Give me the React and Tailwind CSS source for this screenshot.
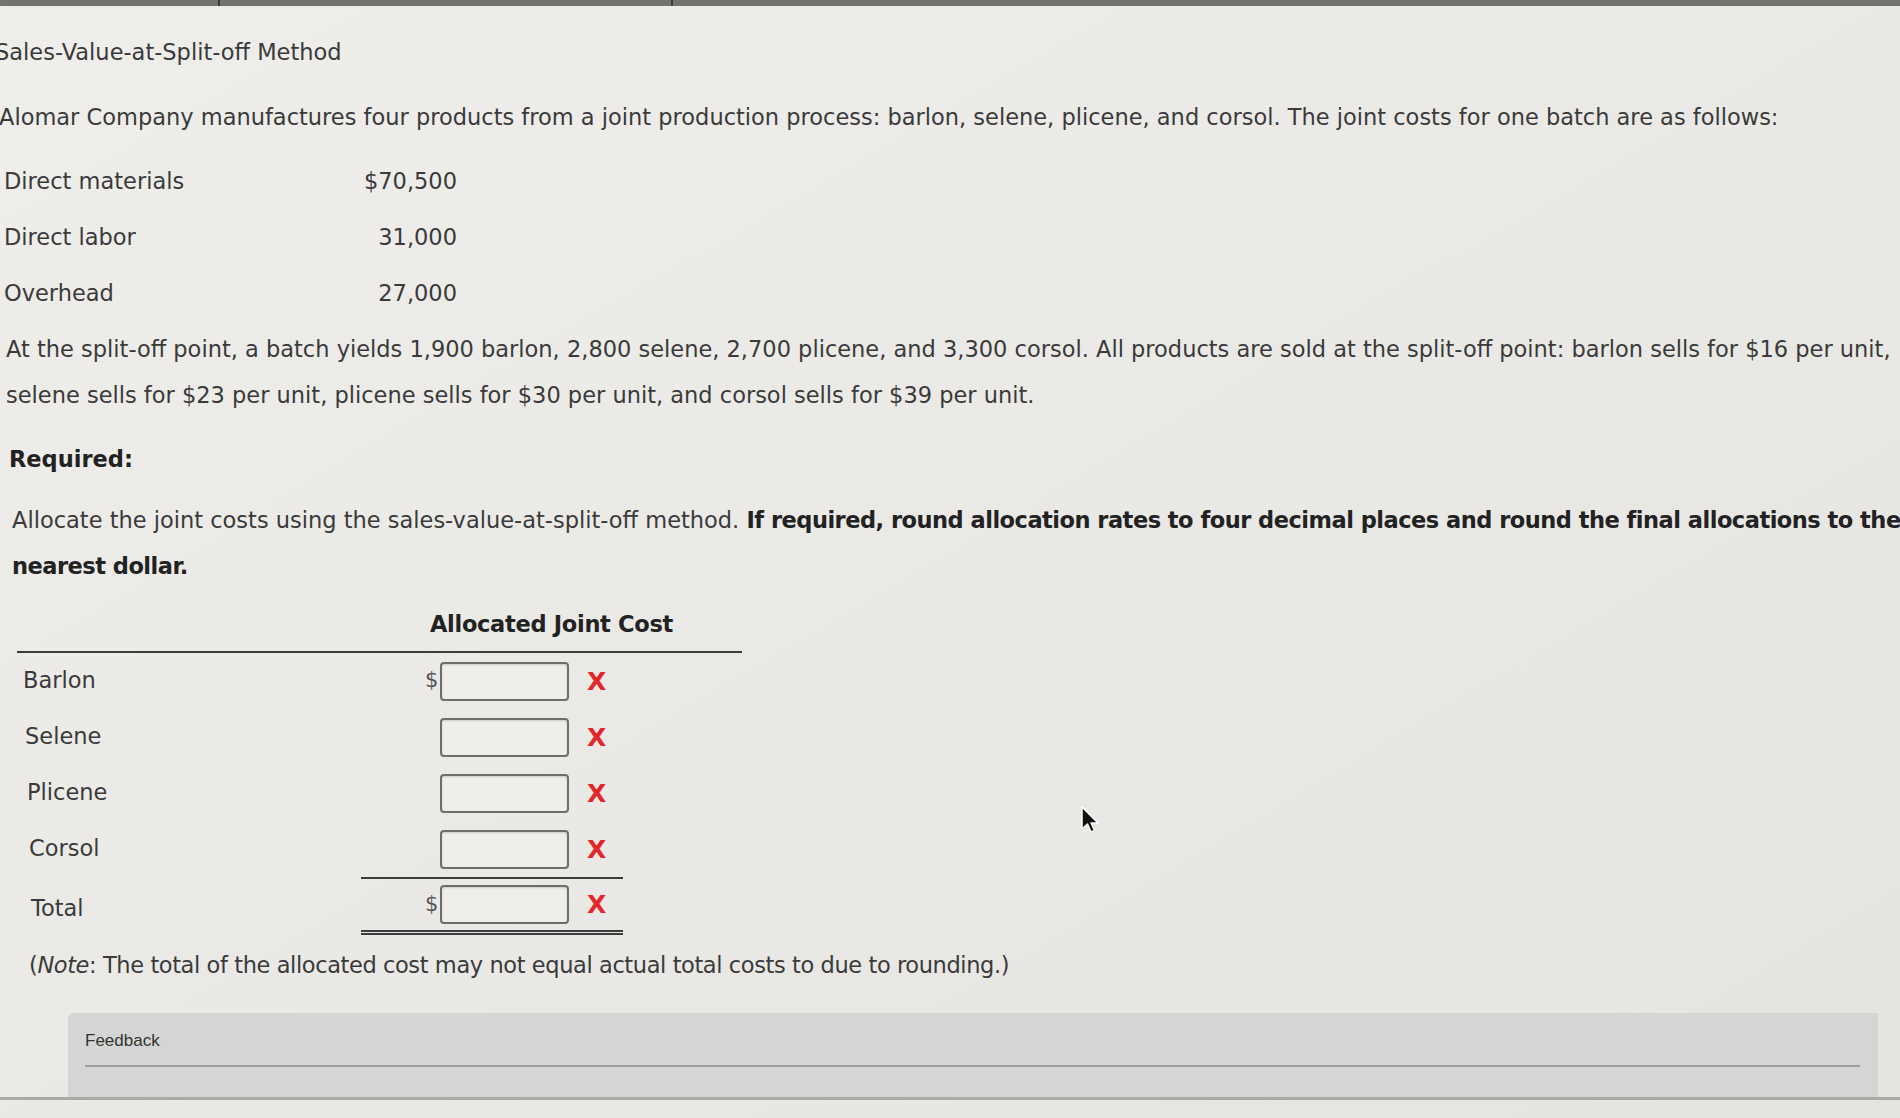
const COSTS = [
  { label: 'Direct materials', value: '$70,500' },
  { label: 'Direct labor', value: '31,000' },
  { label: 'Overhead', value: '27,000' },
]

const PRODUCTS = [
  { name: 'Barlon', dollar: true, pad: 'pl-[6px]' },
  { name: 'Selene', dollar: false, pad: 'pl-[8px]' },
  { name: 'Plicene', dollar: false, pad: 'pl-[10px]' },
  { name: 'Corsol', dollar: false, pad: 'pl-[12px]' },
]

function AnswerCell({ dollar, top }) {
  return (
    <div className={`w-[262px] h-full flex items-center pl-[64px] ${top ? 'border-t-2 border-[#3c3c3c]' : ''}`}>
      <span className={`w-[15px] text-[21px] text-[#555] ${dollar ? '' : 'invisible'}`}>$</span>
      <div className="w-[129px] h-[39px] rounded-[4px] border-2 border-[#6d6d6b] bg-[#efeeeb] shadow-[inset_0_1px_2px_rgba(0,0,0,0.15)]" />
      <span className="ml-[18px] text-[25px] leading-none font-bold text-[#e3262b]">X</span>
    </div>
  )
}

export default function App() {
  return (
    <div className="relative h-[1118px] w-[1900px] overflow-hidden bg-linear-to-br from-[#efeeeb] to-[#e5e4e0] font-['DejaVu_Sans',Verdana,sans-serif] text-[22.5px] text-[#3a3a3a]">
      {/* browser chrome strip */}
      <div className="h-[6px] bg-[#727270] flex">
        <div className="w-[220px] border-r-2 border-[#3a3a3a]" />
        <div className="w-[453px] border-r-2 border-[#3a3a3a]" />
      </div>

      <div className="mt-[31px] -ml-[5px] leading-[30px]">Sales-Value-at-Split-off Method</div>

      <p className="mt-[27px] -ml-[1px] leading-[46px] whitespace-nowrap">
        Alomar Company manufactures four products from a joint production process: barlon, selene, plicene, and corsol. The joint costs for one batch are as follows:
      </p>

      <div className="mt-[14px] ml-[4px]">
        {COSTS.map(({ label, value }) => (
          <div key={label} className="flex h-[56px] items-center">
            <span className="w-[300px]">{label}</span>
            <span className="w-[153px] text-right">{value}</span>
          </div>
        ))}
      </div>

      <p className="mt-[4px] ml-[6px] leading-[46px] whitespace-nowrap">
        At the split-off point, a batch yields 1,900 barlon, 2,800 selene, 2,700 plicene, and 3,300 corsol. All products are sold at the split-off point: barlon sells for $16 per unit,
        <br />
        selene sells for $23 per unit, plicene sells for $30 per unit, and corsol sells for $39 per unit.
      </p>

      <p className="mt-[18px] ml-[9px] leading-[46px] font-bold text-[#222]">Required:</p>

      <p className="mt-[15px] ml-[12px] leading-[46px] whitespace-nowrap">
        Allocate the joint costs using the sales-value-at-split-off method.{' '}
        <b className="text-[#222] tracking-[-0.5px]">If required, round allocation rates to four decimal places and round the final allocations to the</b>
        <br />
        <b className="text-[#222] tracking-[-0.5px]">nearest dollar.</b>
      </p>

      {/* answer table */}
      <div className="mt-[20px] ml-[17px] w-[725px]">
        <div className="flex pb-[12px] border-b-2 border-[#3c3c3c] leading-[30px]">
          <div className="w-[344px]" />
          <div className="flex-1 text-center font-bold text-[#222] tracking-[-0.3px]">Allocated Joint Cost</div>
        </div>
        {PRODUCTS.map(({ name, dollar, pad }) => (
          <div key={name} className="flex h-[56px] items-center">
            <span className={`w-[344px] ${pad}`}>{name}</span>
            <AnswerCell dollar={dollar} />
          </div>
        ))}
        <div className="flex h-[58px] items-center">
          <span className="w-[344px] pl-[14px] pt-[6px]">Total</span>
          <div className="h-full border-b-[5px] border-double border-[#3c3c3c]">
            <AnswerCell dollar top />
          </div>
        </div>
      </div>

      <p className="mt-[15px] ml-[29px] leading-[30px] tracking-[-0.4px]">
        (<i>Note</i>: The total of the allocated cost may not equal actual total costs to due to rounding.)
      </p>

      {/* feedback panel */}
      <div className="mt-[33px] ml-[68px] w-[1810px] h-[84px] rounded-tl-[6px] bg-[#d3d6d4] pt-[18px] pl-[17px] pr-[18px] font-['Liberation_Sans',Arial,sans-serif]">
        <div className="text-[17px] leading-[20px] text-[#333]">Feedback</div>
        <div className="mt-[14px] h-[2px] bg-[#9c9f9d]" />
      </div>
      <div className="h-[3px] bg-[#a9aaa7]" />

      {/* mouse pointer */}
      <svg className="absolute left-[1080px] top-[805px]" width="22" height="30" viewBox="0 0 22 30">
        <path d="M2 2 L2 24 L7.5 19 L11 27 L14.5 25.5 L11 18 L18 18 Z" fill="#111" stroke="#fff" strokeWidth="1.5" strokeLinejoin="round" />
      </svg>
    </div>
  )
}
